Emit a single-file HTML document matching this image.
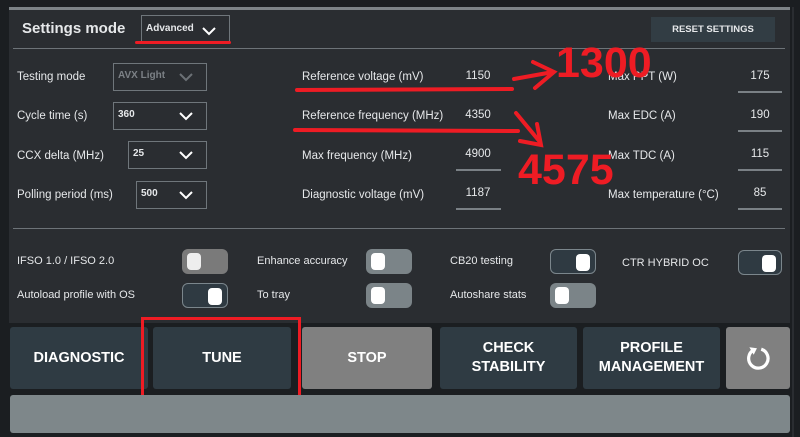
<!DOCTYPE html>
<html><head><style>
*{margin:0;padding:0;box-sizing:border-box}
body{width:800px;height:437px;background:#1b1e21;position:relative;overflow:hidden;font-family:"Liberation Sans",sans-serif;color:#e6e8ea}
.a{position:absolute}
.t{font-size:11.5px;white-space:nowrap}
.dd{position:absolute;border:1px solid #6f767b;height:28px}
.dd span{position:absolute;left:4px;top:6px;font-size:10px;font-weight:bold}
.chev{position:absolute;right:12px;top:7px;width:16px;height:12px}
.ul{position:absolute;height:2px;background:#7a8085}
.v{position:absolute;font-size:11.5px;width:44px;text-align:center}
.tg{position:absolute;width:46px;height:25px;border-radius:6px}
.tg i{position:absolute;top:4px;width:14px;height:17px;border-radius:4px;background:#fff}
.off{background:#7b8488}
.off i{left:5px}
.on{background:#2f3a42;border:1.5px solid #7b868c}
.on i{right:5px}
.btn{position:absolute;top:327px;height:62px;background:#2f3b43;border-radius:3px;color:#fff;font-weight:bold;font-size:14.5px;display:flex;align-items:center;justify-content:center;text-align:center;line-height:19px}
.red{color:#ee1c24;font-weight:bold;font-size:43px}
</style></head><body>
<div class="a" style="left:9px;top:7px;width:781px;height:316px;background:#2a2d31;border-top:3px solid #7d8387"></div>
<div class="a" style="left:792px;top:7px;width:2px;height:430px;background:#2a2d31"></div>
<div class="a t" style="left:22px;top:20px;font-size:15px;font-weight:bold">Settings mode</div>
<div class="dd" style="left:141px;top:15px;width:89px;height:27px"><span style="top:7px">Advanced</span><svg class="chev" viewBox="0 0 16 12" style="right:12px;top:9px"><path d="M2 3l6 6 6-6" stroke="#fff" stroke-width="2" fill="none"/></svg></div>
<div class="a" style="left:135px;top:41px;width:96px;height:3px;background:#ee1c24;border-radius:2px"></div>
<div class="a" style="left:651px;top:17px;width:124px;height:25px;background:#323d44;font-size:9.5px;font-weight:bold;text-align:center;line-height:25px">RESET SETTINGS</div>
<div class="a" style="left:13px;top:48px;width:772px;height:1px;background:#6d7378"></div>

<div class="a t" style="left:17px;top:71px">Testing mode</div>
<div class="dd" style="left:113px;top:63px;width:94px;color:#7c8186"><span>AVX Light</span><svg class="chev" viewBox="0 0 16 12"><path d="M2 3l6 6 6-6" stroke="#6c7176" stroke-width="2" fill="none"/></svg></div>
<div class="a t" style="left:17px;top:110px">Cycle time (s)</div>
<div class="dd" style="left:113px;top:102px;width:94px"><span>360</span><svg class="chev" viewBox="0 0 16 12"><path d="M2 3l6 6 6-6" stroke="#fff" stroke-width="2" fill="none"/></svg></div>
<div class="a t" style="left:17px;top:150px">CCX delta (MHz)</div>
<div class="dd" style="left:128px;top:141px;width:79px"><span>25</span><svg class="chev" viewBox="0 0 16 12"><path d="M2 3l6 6 6-6" stroke="#fff" stroke-width="2" fill="none"/></svg></div>
<div class="a t" style="left:17px;top:189px">Polling period (ms)</div>
<div class="dd" style="left:136px;top:181px;width:71px"><span>500</span><svg class="chev" viewBox="0 0 16 12"><path d="M2 3l6 6 6-6" stroke="#fff" stroke-width="2" fill="none"/></svg></div>

<div class="a t" style="left:302px;top:71px">Reference voltage (mV)</div>
<div class="a t" style="left:302px;top:110px">Reference frequency (MHz)</div>
<div class="a t" style="left:302px;top:150px">Max frequency (MHz)</div>
<div class="a t" style="left:302px;top:189px">Diagnostic voltage (mV)</div>
<div class="v" style="left:456px;top:70px">1150</div>
<div class="v" style="left:456px;top:109px">4350</div>
<div class="v" style="left:456px;top:148px">4900</div>
<div class="v" style="left:456px;top:187px">1187</div>
<div class="ul" style="left:456px;top:169px;width:45px"></div>
<div class="ul" style="left:456px;top:208px;width:45px"></div>

<div class="a t" style="left:608px;top:71px">Max PPT (W)</div>
<div class="a t" style="left:608px;top:110px">Max EDC (A)</div>
<div class="a t" style="left:608px;top:150px">Max TDC (A)</div>
<div class="a t" style="left:608px;top:189px">Max temperature (°C)</div>
<div class="v" style="left:738px;top:70px">175</div>
<div class="v" style="left:738px;top:109px">190</div>
<div class="v" style="left:738px;top:148px">115</div>
<div class="v" style="left:738px;top:187px">85</div>
<div class="ul" style="left:738px;top:91px;width:44px"></div>
<div class="ul" style="left:738px;top:130px;width:44px"></div>
<div class="ul" style="left:738px;top:169px;width:44px"></div>
<div class="ul" style="left:738px;top:208px;width:44px"></div>

<svg class="a" style="left:0;top:0" width="800" height="437">
<g stroke="#ee1c24" stroke-width="4" stroke-linecap="round" fill="none">
<path d="M297 90L512 89"/><path d="M295 130L518 131"/>
<path d="M514 79L553 72M533 62L554 72L535 88"/>
<path d="M516 113L540 142M520 141L541 145L537 124"/>
</g></svg>
<div class="a red" style="left:556px;top:39px;line-height:48px">1300</div>
<div class="a red" style="left:518px;top:146px;line-height:48px">4575</div>

<div class="a" style="left:13px;top:228px;width:772px;height:1px;background:#6d7378"></div>
<div class="a t" style="left:17px;top:255px;font-size:11px">IFSO 1.0 / IFSO 2.0</div>
<div class="a t" style="left:17px;top:289px;font-size:11px">Autoload profile with OS</div>
<div class="a t" style="left:257px;top:255px;font-size:11px">Enhance accuracy</div>
<div class="a t" style="left:257px;top:289px;font-size:11px">To tray</div>
<div class="a t" style="left:450px;top:255px;font-size:11px">CB20 testing</div>
<div class="a t" style="left:450px;top:289px;font-size:11px">Autoshare stats</div>
<div class="a t" style="left:622px;top:257px;font-size:11px">CTR HYBRID OC</div>
<div class="tg off" style="left:182px;top:249px;background:#7a7a7a"><i style="background:#eee"></i></div>
<div class="tg on" style="left:182px;top:283px"><i></i></div>
<div class="tg off" style="left:366px;top:249px"><i></i></div>
<div class="tg off" style="left:366px;top:283px"><i></i></div>
<div class="tg on" style="left:550px;top:249px"><i></i></div>
<div class="tg off" style="left:550px;top:283px"><i></i></div>
<div class="tg on" style="left:738px;top:250px;width:44px"><i></i></div>

<div class="btn" style="left:10px;width:138px">DIAGNOSTIC</div>
<div class="btn" style="left:153px;width:138px">TUNE</div>
<div class="btn" style="left:302px;width:130px;background:#808080">STOP</div>
<div class="btn" style="left:440px;width:137px">CHECK<br>STABILITY</div>
<div class="btn" style="left:583px;width:137px">PROFILE<br>MANAGEMENT</div>
<div class="btn" style="left:726px;width:64px;background:#808080"><svg width="28" height="28" viewBox="0 0 26 26"><path d="M9 5.5A9 9 0 1 0 16 4.8" stroke="#fff" stroke-width="3" fill="none"/><path d="M5 3l7 1-3 6z" fill="#fff"/></svg></div>
<div class="a" style="left:141px;top:317px;width:160px;height:83px;border:3px solid #ee1c24"></div>
<div class="a" style="left:10px;top:395px;width:780px;height:38px;background:#7e878a;border-radius:3px"></div>
</body></html>
